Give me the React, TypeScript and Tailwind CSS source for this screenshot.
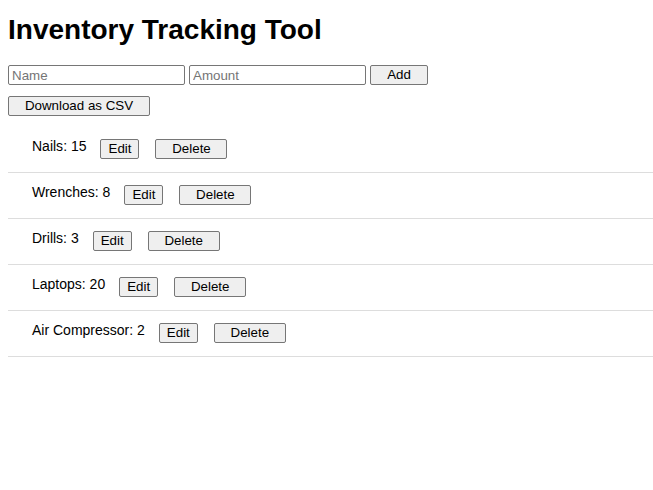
const items = [
  { name: 'Nails', amount: 15 },
  { name: 'Wrenches', amount: 8 },
  { name: 'Drills', amount: 3 },
  { name: 'Laptops', amount: 20 },
  { name: 'Air Compressor', amount: 2 },
];

const btn =
  'h-[20px] border border-[#767676] rounded-[2px] bg-[#efefef] text-[13.33px] leading-none text-black';

export default function App() {
  return (
    <div className="min-h-[490px] bg-white pt-2 pl-2 font-['Liberation_Sans',Arial,sans-serif] text-black">
      <h1 className="mt-[6px] text-[28px] font-bold leading-[32px]">Inventory Tracking Tool</h1>

      {/* Add form */}
      <div className="mt-[19px] flex gap-1">
        <input
          placeholder="Name"
          className="h-[20px] w-[177px] rounded-[2px] border border-[#767676] px-[3px] text-[13.33px] outline-none placeholder:text-[#757575]"
        />
        <input
          placeholder="Amount"
          className="h-[20px] w-[177px] rounded-[2px] border border-[#767676] px-[3px] text-[13.33px] outline-none placeholder:text-[#757575]"
        />
        <button className={`${btn} w-[58px]`}>Add</button>
      </div>

      <button className={`${btn} mt-[11px] block w-[142px]`}>Download as CSV</button>

      {/* Inventory list */}
      <ul className="mt-[11px]">
        {items.map((item) => (
          <li
            key={item.name}
            className="flex h-[46px] items-start border-b border-[#dddddd] pl-6 pt-[12px]"
          >
            <span className="text-[14px] leading-[14px]">
              {item.name}: {item.amount}
            </span>
            <button className={`${btn} ml-[14px] w-[39px]`}>Edit</button>
            <button className={`${btn} ml-4 w-[72px]`}>Delete</button>
          </li>
        ))}
      </ul>
    </div>
  );
}
